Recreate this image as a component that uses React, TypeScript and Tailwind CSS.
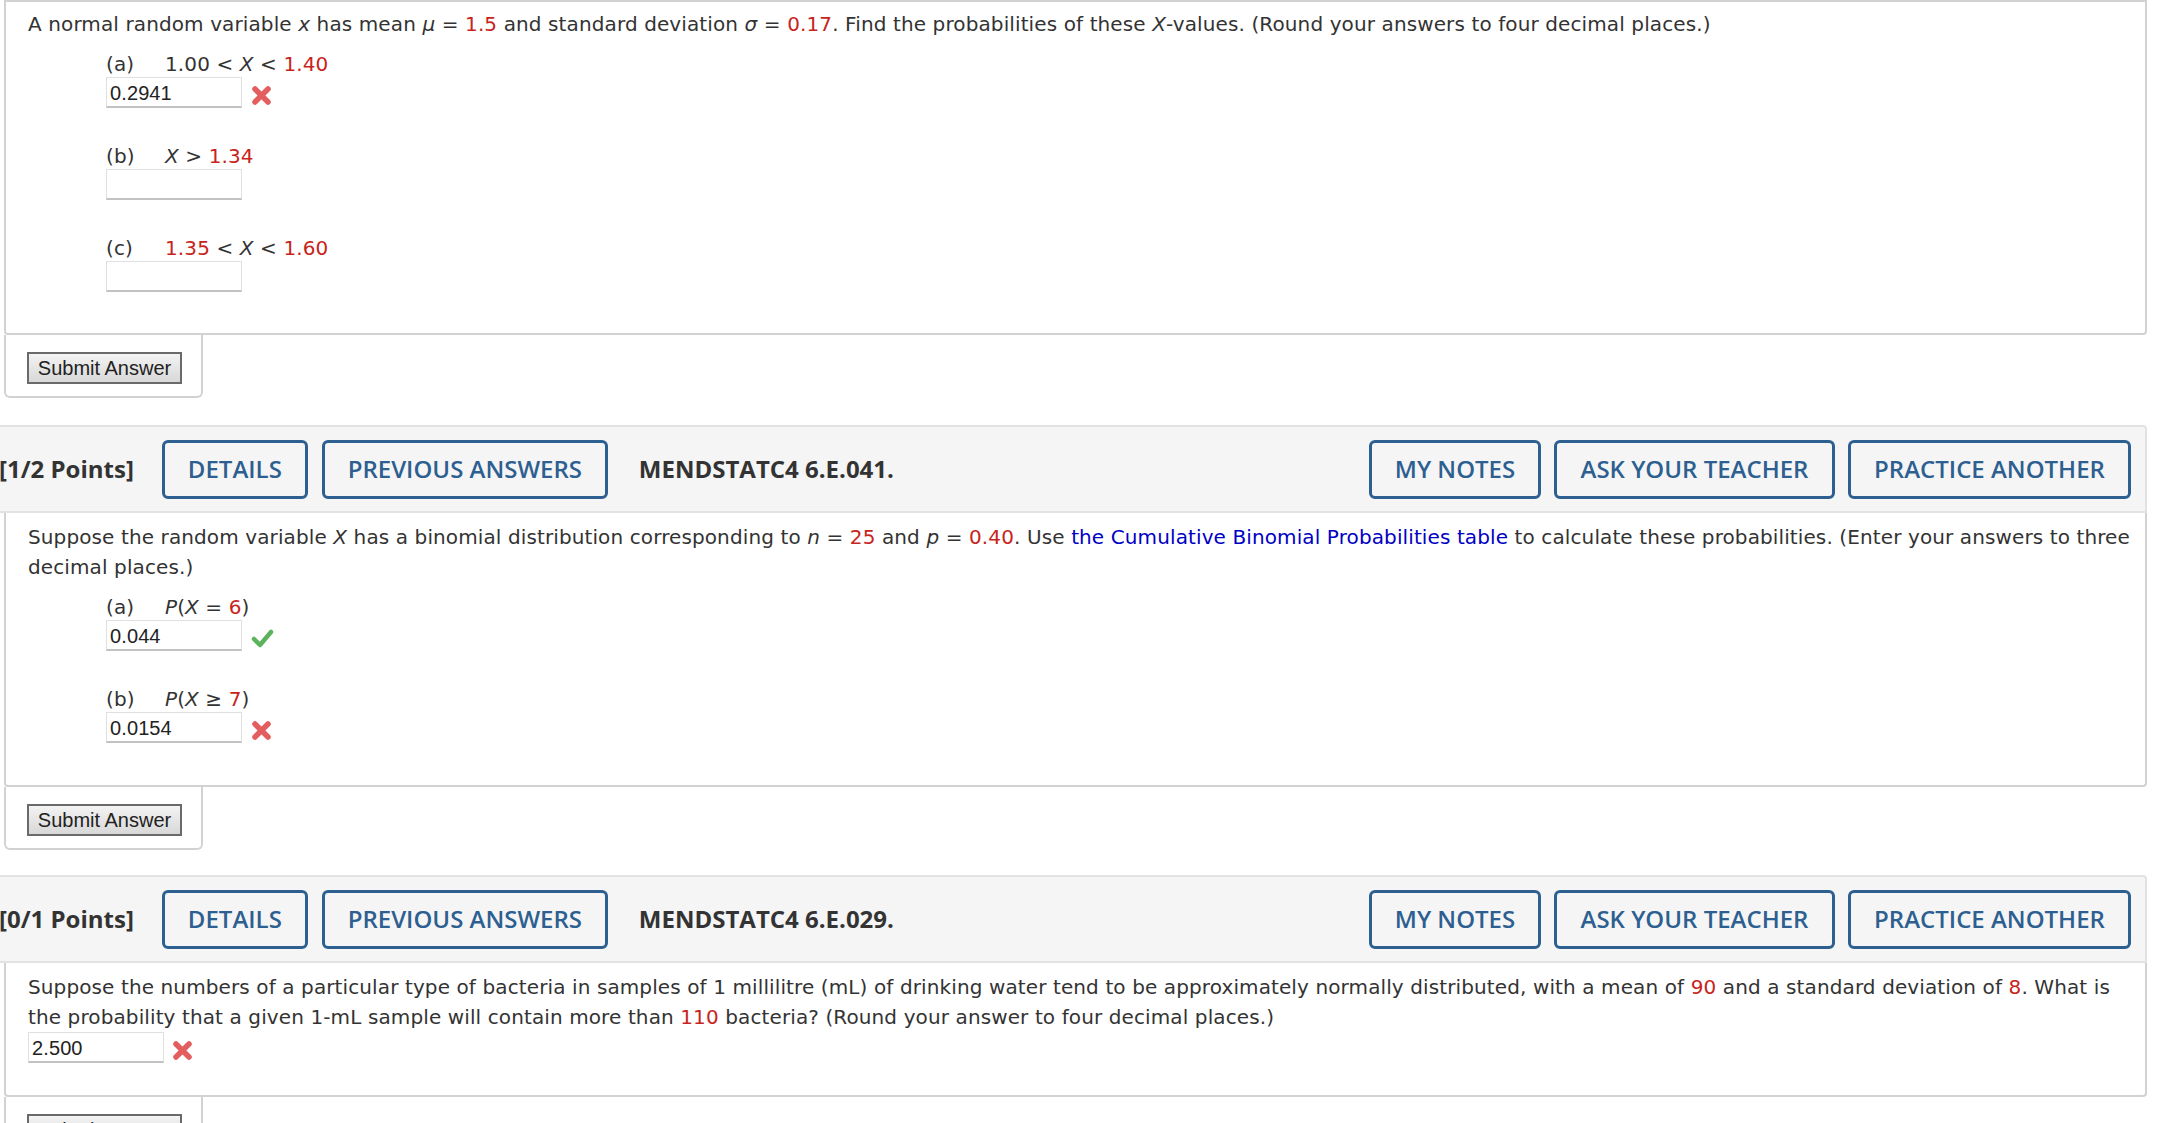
import type { ReactNode } from 'react';

function Red({ children }: { children: ReactNode }) {
  return <span className="text-[#c8241c]">{children}</span>;
}

function Link({ children }: { children: ReactNode }) {
  return <span className="text-[#0000c4]">{children}</span>;
}

function WrongMark() {
  return (
    <svg width="21" height="21" viewBox="0 0 21 21" className="mt-[5px]">
      <path d="M4 4 L17 17 M17 4 L4 17" stroke="#e35e5e" strokeWidth="5.5" strokeLinecap="round" />
    </svg>
  );
}

function RightMark() {
  return (
    <svg width="23" height="19" viewBox="0 0 23 19" className="mt-[6px]">
      <path d="M3 10 L9 16 L20 3" stroke="#5cb35c" strokeWidth="4.5" fill="none" strokeLinecap="round" strokeLinejoin="round" />
    </svg>
  );
}

function AnswerBox({ value }: { value?: string }) {
  return (
    <div className="h-[31px] w-[136px] border border-b-2 border-[#e0e0e0] border-b-[#c2c2c2] bg-white px-[3px] font-['Liberation_Sans',sans-serif] text-[20px] leading-[30px] text-[#222]">
      {value}
    </div>
  );
}

function Part({
  label,
  expr,
  value,
  mark,
  first,
}: {
  label: string;
  expr: ReactNode;
  value?: string;
  mark?: ReactNode;
  first?: boolean;
}) {
  return (
    <div className={first ? 'mt-[13px]' : 'mt-[36px]'}>
      <div className="flex leading-[24px]">
        <span className="w-[59px]">{label}</span>
        <span>{expr}</span>
      </div>
      <div className="mt-px flex items-center gap-[9px]">
        <AnswerBox value={value} />
        {mark}
      </div>
    </div>
  );
}

function SubmitTab() {
  return (
    <div className="h-[63px] w-[199px] rounded-b-[6px] border-2 border-t-0 border-[#d2d2d2] pl-[21px] pt-[17px]">
      <button className="h-[32px] w-[155px] border-2 border-[#6a6a6a] bg-linear-to-b from-[#f3f3f3] to-[#d8d8d8] font-['Liberation_Sans',sans-serif] text-[20px] leading-[26px] text-[#222]">
        Submit Answer
      </button>
    </div>
  );
}

function HeadButton({ children, w }: { children: ReactNode; w: string }) {
  return (
    <div
      className={`flex h-[59px] items-center justify-center rounded-[6px] border-[3px] border-[#2d5f91] font-semibold text-[#2d5f91] ${w}`}
    >
      {children}
    </div>
  );
}

function Header({ points, code }: { points: string; code: string }) {
  return (
    <div className="-ml-[20px] flex h-[88px] items-center rounded-tr-[4px] border-2 border-[#e2e2e2] bg-[#f5f5f5] pl-[13px] pr-[14px] font-['Open_Sans',sans-serif] text-[24px] leading-[30px]">
      <span className="font-bold text-[#333]">{points}</span>
      <div className="ml-[28px] flex gap-[14px]">
        <HeadButton w="w-[146px]">DETAILS</HeadButton>
        <HeadButton w="w-[286px]">PREVIOUS ANSWERS</HeadButton>
      </div>
      <span className="ml-[31px] font-bold text-[#333]">{code}</span>
      <div className="ml-auto flex gap-[13px]">
        <HeadButton w="w-[172px]">MY NOTES</HeadButton>
        <HeadButton w="w-[281px]">ASK YOUR TEACHER</HeadButton>
        <HeadButton w="w-[283px]">PRACTICE ANOTHER</HeadButton>
      </div>
    </div>
  );
}

const card =
  "rounded-b-[4px] border-2 border-[#d2d2d2] bg-white pl-[22px] pr-[10px] pt-[7px] font-['DejaVu_Sans',sans-serif] text-[20px] leading-[30px] tracking-[0.11px] text-[#333]";

export default function App() {
  return (
    <div className="h-screen overflow-hidden bg-white pl-[4px] pr-[11px]">
      <section className={`${card} pb-[41px]`}>
        <p>
          A normal random variable <i>x</i> has mean <i>μ</i> = <Red>1.5</Red> and standard deviation <i>σ</i> ={' '}
          <Red>0.17</Red>. Find the probabilities of these <i>X</i>-values. (Round your answers to four decimal
          places.)
        </p>
        <div className="pl-[78px]">
          <Part
            first
            label="(a)"
            expr={
              <>
                1.00 &lt; <i>X</i> &lt; <Red>1.40</Red>
              </>
            }
            value="0.2941"
            mark={<WrongMark />}
          />
          <Part
            label="(b)"
            expr={
              <>
                <i>X</i> &gt; <Red>1.34</Red>
              </>
            }
          />
          <Part
            label="(c)"
            expr={
              <>
                <Red>1.35</Red> &lt; <i>X</i> &lt; <Red>1.60</Red>
              </>
            }
          />
        </div>
      </section>
      <SubmitTab />

      <div className="mt-[27px]">
        <Header points="[1/2 Points]" code="MENDSTATC4 6.E.041." />
        <section className={`${card} border-t-0 pt-[9px] pb-[42px]`}>
          <p>
            Suppose the random variable <i>X</i> has a binomial distribution corresponding to <i>n</i> ={' '}
            <Red>25</Red> and <i>p</i> = <Red>0.40</Red>. Use <Link>the Cumulative Binomial Probabilities table</Link>{' '}
            to calculate these probabilities. (Enter your answers to three decimal places.)
          </p>
          <div className="pl-[78px]">
            <Part
              first
              label="(a)"
              expr={
                <>
                  <i>P</i>(<i>X</i> = <Red>6</Red>)
                </>
              }
              value="0.044"
              mark={<RightMark />}
            />
            <Part
              label="(b)"
              expr={
                <>
                  <i>P</i>(<i>X</i> ≥ <Red>7</Red>)
                </>
              }
              value="0.0154"
              mark={<WrongMark />}
            />
          </div>
        </section>
        <SubmitTab />
      </div>

      <div className="mt-[25px]">
        <Header points="[0/1 Points]" code="MENDSTATC4 6.E.029." />
        <section className={`${card} border-t-0 pt-[9px] pb-[32px]`}>
          <p>
            Suppose the numbers of a particular type of bacteria in samples of 1 millilitre (mL) of drinking water
            tend to be approximately normally distributed, with a mean of <Red>90</Red> and a standard deviation of{' '}
            <Red>8</Red>. What is the probability that a given 1-mL sample will contain more than <Red>110</Red>{' '}
            bacteria? (Round your answer to four decimal places.)
          </p>
          <div className="flex items-center gap-[8px]">
            <AnswerBox value="2.500" />
            <WrongMark />
          </div>
        </section>
        <SubmitTab />
      </div>
    </div>
  );
}
